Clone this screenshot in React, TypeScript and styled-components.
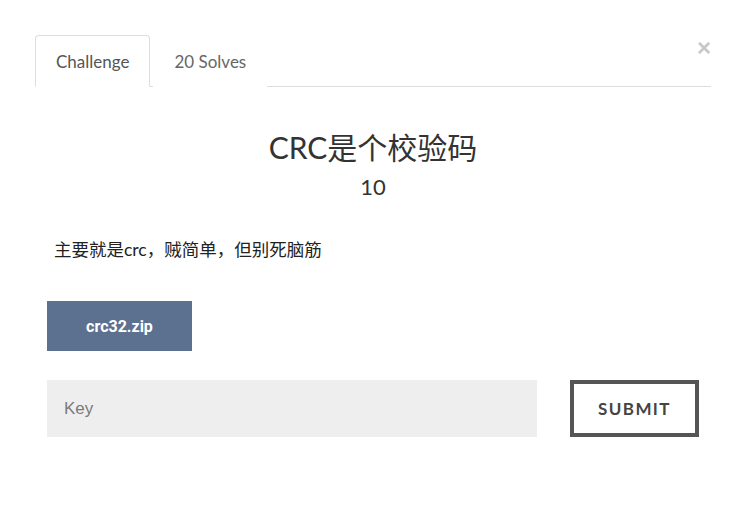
import React from 'react'
import styled, { createGlobalStyle } from 'styled-components'

const GlobalStyle = createGlobalStyle`
  html, body {
    margin: 0;
    padding: 0;
    background: #ffffff;
    font-family: Lato, "Noto Sans CJK SC", sans-serif;
    color: #333333;
  }
  * {
    box-sizing: border-box;
  }
`

// Styled Components
const ModalWrapper = styled.div`
  position: relative;
  width: 747px;
  height: 509px;
  padding: 35px 36px 0 35px;
`

const CloseButton = styled.button`
  position: absolute;
  top: 36px;
  right: 36px;
  border: none;
  background: transparent;
  padding: 0;
  font-family: "Liberation Sans", Arial, sans-serif;
  font-size: 24px;
  font-weight: 700;
  line-height: 24px;
  color: #c8c8c8;
  cursor: pointer;
`

const TabList = styled.ul`
  display: flex;
  margin: 0;
  padding: 0;
  list-style: none;
  border-bottom: 1px solid #dddddd;
`

const Tab = styled.li<{ $active?: boolean }>`
  margin-right: 3px;
  margin-bottom: -1px;
  padding: 0 20px;
  height: 52px;
  display: flex;
  align-items: center;
  font-size: 17px;
  color: ${(props) => (props.$active ? '#555555' : '#666666')};
  background: #ffffff;
  border: 1px solid ${(props) => (props.$active ? '#dddddd' : 'transparent')};
  border-bottom-color: ${(props) => (props.$active ? '#ffffff' : 'transparent')};
  border-radius: 4px 4px 0 0;
`

const Body = styled.div`
  padding: 0 12px;
`

const Title = styled.h3`
  margin: 42px 0 0;
  text-align: center;
  font-size: 30px;
  font-weight: 400;
  line-height: 36px;
  color: #333333;
`

const Points = styled.h4`
  margin: 7px 0 0;
  text-align: center;
  font-size: 22px;
  font-weight: 400;
  line-height: 30px;
  color: #333333;
`

const Description = styled.p`
  margin: 36px 0 0 7px;
  font-size: 17.5px;
  line-height: 24px;
  color: #222222;
`

const FileButton = styled.a`
  display: inline-flex;
  align-items: center;
  justify-content: center;
  width: 145px;
  height: 50px;
  margin-top: 39px;
  background: #5c7190;
  color: #ffffff;
  font-family: Roboto, "Liberation Sans", Arial, sans-serif;
  font-size: 16px;
  font-weight: 700;
  text-decoration: none;
`

const SubmitRow = styled.form`
  display: grid;
  grid-template-columns: 490px 1fr;
  align-items: stretch;
  margin-top: 29px;
`

const KeyInput = styled.input`
  height: 57px;
  padding: 0 17px;
  border: none;
  background: #eeeeee;
  font-family: "Liberation Sans", Arial, sans-serif;
  font-size: 17px;
  color: #333333;
  outline: none;

  &::placeholder {
    color: #7a7a7a;
  }
`

const SubmitButton = styled.button`
  justify-self: end;
  width: 129px;
  height: 57px;
  border: 4px solid #555555;
  background: #ffffff;
  font-family: Lato, sans-serif;
  font-size: 17px;
  font-weight: 700;
  letter-spacing: 1.4px;
  color: #444444;
  cursor: pointer;
`

// COMPONENT
const App: React.FC = () => {
  return (
    <>
      <GlobalStyle />
      <ModalWrapper>
        <CloseButton aria-label="Close">×</CloseButton>
        <TabList>
          <Tab $active>Challenge</Tab>
          <Tab>20 Solves</Tab>
        </TabList>
        <Body>
          <Title>CRC是个校验码</Title>
          <Points>10</Points>
          <Description>主要就是crc，贼简单，但别死脑筋</Description>
          <FileButton href="#">crc32.zip</FileButton>
          <SubmitRow onSubmit={(e) => e.preventDefault()}>
            <KeyInput type="text" placeholder="Key" />
            <SubmitButton type="submit">SUBMIT</SubmitButton>
          </SubmitRow>
        </Body>
      </ModalWrapper>
    </>
  )
}

export default App
